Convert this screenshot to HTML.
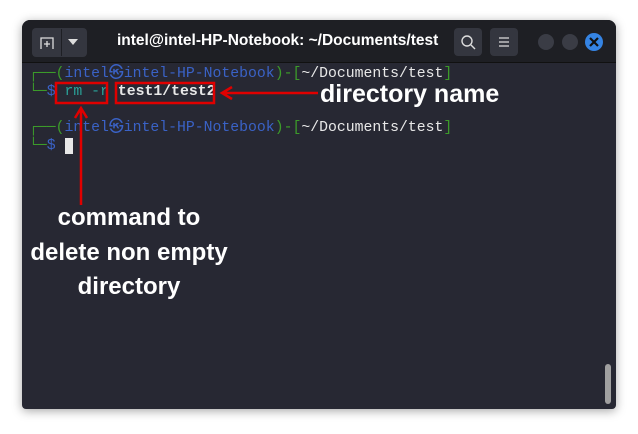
<!DOCTYPE html>
<html><head><style>
body{margin:0;width:638px;height:434px;background:#fff;position:relative;overflow:hidden;font-family:"Liberation Sans",sans-serif}
.win{position:absolute;left:22px;top:20px;width:594px;height:389px;background:#272833;border-radius:8px 8px 4px 4px;box-shadow:0 2px 10px rgba(0,0,0,.35);overflow:hidden}
.tb{position:absolute;left:0;top:0;width:594px;height:42px;background:#1e1f24;border-bottom:1px solid #111}
.btn{position:absolute;background:#34363f;border-radius:4px}
.title{position:absolute;left:95px;top:12px;color:#fff;font-weight:bold;font-size:15.5px;white-space:nowrap}
.term{position:absolute;left:29px;top:65px;font-family:"Liberation Mono",monospace;font-size:14.8px;line-height:18px;white-space:pre;color:#3a62c6}
.g{color:#3c9b2a}.w{color:#e8e8e8}.c{color:#2aa198}.b{color:#3a62c6}
.ann{position:absolute;color:#fff;font-weight:bold;font-size:24px}
</style></head><body>
<div class="win">
 <div class="tb">
  <div class="btn" style="left:10px;top:8px;width:55px;height:29px"></div>
  <div style="position:absolute;left:39px;top:9px;width:1px;height:27px;background:#1e1f24"></div>
  <svg style="position:absolute;left:17px;top:15px" width="16" height="16" viewBox="0 0 16 16" fill="none" stroke="#ddd" stroke-width="1.3"><path d="M2 14V3h12v11M8 6v6M5 9h6"/></svg>
  <svg style="position:absolute;left:46px;top:19px" width="10" height="6"><path d="M0 0h10L5 6z" fill="#ddd"/></svg>
  <div class="title">intel@intel-HP-Notebook: ~/Documents/test</div>
  <div class="btn" style="left:432px;top:8px;width:28px;height:28px"></div>
  <svg style="position:absolute;left:438px;top:14px" width="16" height="16" fill="none" stroke="#ddd" stroke-width="1.4"><circle cx="7" cy="7" r="5"/><path d="M11 11l4 4"/></svg>
  <div class="btn" style="left:468px;top:8px;width:28px;height:28px"></div>
  <svg style="position:absolute;left:476px;top:16px" width="12" height="12" stroke="#ddd" stroke-width="1.3"><path d="M1 2h10M1 6h10M1 10h10"/></svg>
  <div style="position:absolute;left:516px;top:14px;width:16px;height:16px;border-radius:50%;background:#3a3c45"></div>
  <div style="position:absolute;left:540px;top:14px;width:16px;height:16px;border-radius:50%;background:#3a3c45"></div>
  <div style="position:absolute;left:563px;top:13px;width:18px;height:18px;border-radius:50%;background:#3584e4"></div>
  <svg style="position:absolute;left:567px;top:17px" width="10" height="10" stroke="#111" stroke-width="2.2"><path d="M1 1l8 8M9 1l-8 8"/></svg>
 </div>
 <div style="position:absolute;right:5px;top:344px;width:6px;height:40px;background:#a0a0a0;border-radius:3px"></div>
</div>
<div class="term"><span class="g">┌──(</span>intel㉿intel-HP-Notebook<span class="g">)-[</span><span class="w">~/Documents/test</span><span class="g">]</span>
<span class="g">└─</span>$ <span class="c">rm -r</span> <span class="w" style="font-weight:bold">test1/test2</span>

<span class="g">┌──(</span>intel㉿intel-HP-Notebook<span class="g">)-[</span><span class="w">~/Documents/test</span><span class="g">]</span>
<span class="g">└─</span>$ <span style="background:#e8e8e8"> </span></div>
<svg style="position:absolute;left:0;top:0" width="638" height="434">
 <g fill="none" stroke="#e00000" stroke-width="2.5">
  <rect x="56" y="83" width="51" height="20"/>
  <rect x="116" y="83" width="98" height="20"/>
  <path d="M318 93H222M232 87l-10 6 10 6"/>
  <path d="M81 205V108M75 118l6-10 6 10"/>
 </g>
</svg>
<div class="ann" style="left:320px;top:80px;font-size:25px">directory name</div>
<div class="ann" style="left:0;width:258px;text-align:center;top:204px">command to</div>
<div class="ann" style="left:0;width:258px;text-align:center;top:239px">delete non empty</div>
<div class="ann" style="left:0;width:258px;text-align:center;top:273px">directory</div>
</body></html>
